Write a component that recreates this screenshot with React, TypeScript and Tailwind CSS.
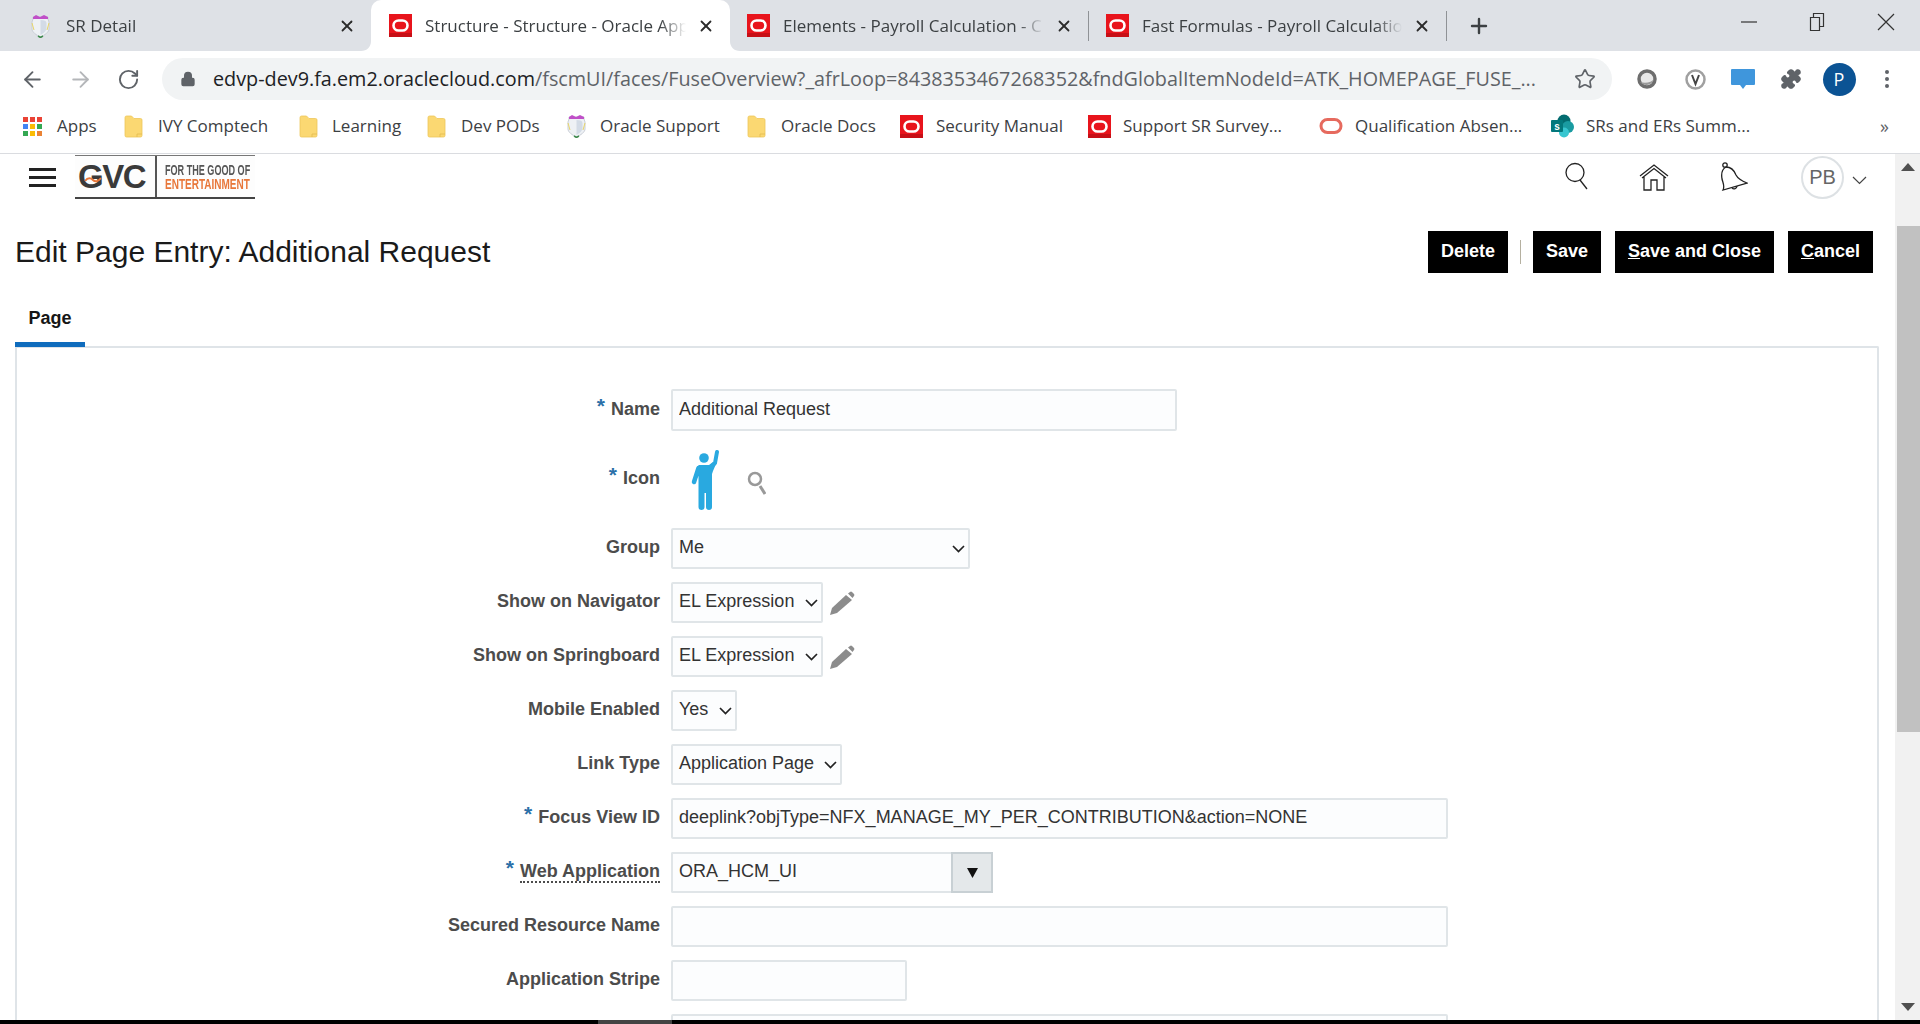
import type { ReactNode } from "react";
import { X, Plus, ArrowLeft, ArrowRight, RotateCw, Lock, Star, Puzzle } from "lucide-react";

const chromeFont = "font-['Open_Sans',sans-serif]";

const OracleIcon = () => (
  <svg width="23" height="23" viewBox="0 0 23 23">
    <rect width="23" height="23" fill="#e8141c" />
    <rect y="19" width="23" height="4" fill="#c70f16" />
    <rect x="4.5" y="6.5" width="14" height="10" rx="5" fill="none" stroke="#fff" strokeWidth="2.6" />
  </svg>
);

const ShieldIcon = () => (
  <svg width="21" height="24" viewBox="0 0 21 24">
    <path d="M3 3h15v2l1 3v7c0 3-4 6-8.500 8C6 21 2 18 2 15V8l1-3z" fill="#eef1f5" stroke="#c9ced6" strokeWidth="1" />
    <path d="M3 3l3-2 4 2 4-2 4 2v2H3z" fill="#c04fc8" />
    <path d="M10.500 6c4 0 6 1 6 3v5c0 3-3 5-6 7z" fill="#d3dbe6" />
    <path d="M2 9l2 7M19 9l-2 7" stroke="#e8d66a" strokeWidth="1" />
    <path d="M8 22l2.500 1.500L13 22" stroke="#3f8a4e" strokeWidth="1.500" fill="none" />
  </svg>
);

const FolderIcon = () => (
  <svg width="19" height="23" viewBox="0 0 19 23">
    <path d="M1 2.500A1.500 1.500 0 0 1 2.500 1h5L10 3.500h6.500A1.500 1.500 0 0 1 18 5v15.500a1.500 1.500 0 0 1-1.500 1.500h-14A1.500 1.500 0 0 1 1 20.500z" fill="#fbd872" stroke="#edc65a" strokeWidth="0.800" />
    <path d="M13 22v-3h5" fill="none" stroke="#e3bb4e" strokeWidth="0.800" />
  </svg>
);

const AppsIcon = () => {
  const colors = ["#ea4335", "#ea4335", "#ea4335", "#4285f4", "#fbbc04", "#34a853", "#34a853", "#fbbc04", "#ea8335"];
  return (
    <div className="grid grid-cols-3 gap-[2px] w-[19px]">
      {colors.map((c, i) => (
        <span key={i} className="w-[5px] h-[5px]" style={{ backgroundColor: c }} />
      ))}
    </div>
  );
};

const RingIcon = () => (
  <svg width="24" height="18" viewBox="0 0 24 18">
    <rect x="2" y="2.500" width="20" height="13" rx="6.500" fill="none" stroke="#e66a5e" strokeWidth="3" />
  </svg>
);

const SharepointIcon = () => (
  <svg width="24" height="24" viewBox="0 0 24 24">
    <circle cx="13" cy="7" r="6.500" fill="#036c70" />
    <circle cx="17" cy="13" r="6" fill="#1a9ba1" />
    <circle cx="13" cy="18.500" r="5" fill="#37c6d0" />
    <rect x="0" y="6" width="12" height="12" rx="1" fill="#03787c" />
    <text x="6" y="15.500" textAnchor="middle" fontSize="10" fontWeight="700" fill="#fff" fontFamily="Liberation Sans, sans-serif">s</text>
  </svg>
);

interface TabProps {
  icon: ReactNode;
  title: string;
  width: string;
  pad: string;
  active?: boolean;
}

const Tab = ({ icon, title, width, pad, active }: TabProps) => (
  <div className={`relative flex items-center h-full shrink-0 ${width} ${pad} ${active ? "bg-white rounded-t-[10px]" : ""}`}>
    {active && (
      <>
        <svg className="absolute bottom-0 left-[-10px]" width="10" height="10" viewBox="0 0 10 10"><path d="M10 0v10H0C6 10 10 6 10 0z" fill="#fff" /></svg>
        <svg className="absolute bottom-0 right-[-10px]" width="10" height="10" viewBox="0 0 10 10"><path d="M0 0v10h10C4 10 0 6 0 0z" fill="#fff" /></svg>
      </>
    )}
    <span className="w-[36px] shrink-0 flex items-center">{icon}</span>
    <span className="flex-1 min-w-0 mr-[11px] whitespace-nowrap text-[17px] text-[#3c4043] [mask-image:linear-gradient(to_right,black_90%,transparent)]">{title}</span>
    <X size={18} strokeWidth={2.4} className="shrink-0 mr-[15px] text-[#2b2b2b]" />
  </div>
);

const TabSep = () => <div className="w-px h-[30px] bg-[#8f9296] shrink-0" />;

const Bookmark = ({ icon, label, width, iconBox = "w-[34px]" }: { icon: ReactNode; label: string; width: string; iconBox?: string }) => (
  <div className={`flex items-center shrink-0 ${width}`}>
    <span className={`shrink-0 flex items-center ${iconBox}`}>{icon}</span>
    <span className="text-[17px] text-[#3c4043] whitespace-nowrap">{label}</span>
  </div>
);

const Chevron = () => (
  <svg width="13" height="8" viewBox="0 0 13 8" className="shrink-0">
    <path d="M1 1l5.500 5.500L12 1" fill="none" stroke="#222" strokeWidth="1.700" />
  </svg>
);

const Pencil = () => (
  <svg width="26" height="24" viewBox="0 0 26 24" className="shrink-0 ml-[6px]">
    <path d="M1 24l2-7L17 4l6 5L8 22z" fill="#8c8c8c" />
    <path d="M19 2.500l2-1.500a1.500 1.500 0 0 1 2 0l2 2a1.500 1.500 0 0 1 0 2l-1.500 2z" fill="#8c8c8c" />
  </svg>
);

const boxClass = "h-[41px] border-2 border-[#e0e5e8] rounded-[2px] bg-[#fcfdfe] text-[18px] text-[#333] flex items-center";

const Field = ({ value = "", width }: { value?: string; width: string }) => (
  <input readOnly defaultValue={value} className={`${boxClass} ${width} px-[6px] pb-[2px] outline-none`} />
);

const Choice = ({ value, width }: { value: string; width: string }) => (
  <div className={`${boxClass} ${width} pl-[6px] pr-[3px] justify-between`}>
    <span className="whitespace-nowrap pb-[2px]">{value}</span>
    <Chevron />
  </div>
);

const Row = ({ label, required, dotted, height = "h-[41px]", children }: { label: string; required?: boolean; dotted?: boolean; height?: string; children: ReactNode }) => (
  <div className={`flex items-center mb-[13px] ${height}`}>
    <div className="w-[643px] shrink-0 mr-[11px] pb-[2px] flex justify-end items-center text-[18px] font-bold text-[#4c4c4c] whitespace-nowrap">
      {required && <span className="text-[#2b70a8] text-[21px] leading-none mr-[6px] -mt-[8px] font-bold">*</span>}
      <span className={dotted ? "border-b-2 border-dotted border-[#4c4c4c] leading-[20px]" : ""}>{label}</span>
    </div>
    {children}
  </div>
);

const ActionButton = ({ children, width }: { children: ReactNode; width: string }) => (
  <button className={`h-[42px] pb-[2px] bg-black text-white text-[18px] font-bold shrink-0 ${width}`}>{children}</button>
);

const Logo = () => (
  <div className="flex w-[180px] h-[44px] border-t border-t-[#777] border-b-2 border-b-[#444] bg-[#fdfdfd] font-['Liberation_Sans',sans-serif]">
    <div className="relative w-[82px] shrink-0 border-r-2 border-r-[#555] flex items-center pl-[3px]">
      <span className="text-[33px] font-bold leading-none tracking-[-1.500px] text-[#3a3a3a]">GVC</span>
      <svg className="absolute left-[9px] top-[20px]" width="18" height="8" viewBox="0 0 18 8">
        <path d="M1 5c3-4 6-3 8-1s5 2 8-2" fill="none" stroke="#e8773a" strokeWidth="2" />
      </svg>
    </div>
    <div className="flex flex-col justify-center pl-[8px] overflow-hidden leading-[14px] text-[15px] font-bold whitespace-nowrap">
      <span className="origin-left scale-x-[0.605] text-[#555]">FOR THE GOOD OF</span>
      <span className="origin-left scale-x-[0.667] text-[#e8773a]">ENTERTAINMENT</span>
    </div>
  </div>
);

export default function App() {
  return (
    <div className="w-[1920px] h-[1024px] flex flex-col overflow-hidden bg-white font-['Liberation_Sans',sans-serif]">
      {/* browser tab strip */}
      <div className={`h-[51px] shrink-0 bg-[#dee1e6] flex items-center ${chromeFont}`}>
        <Tab icon={<ShieldIcon />} title="SR Detail" width="w-[371px]" pad="pl-[30px]" />
        <Tab active icon={<OracleIcon />} title="Structure - Structure - Oracle App" width="w-[359px]" pad="pl-[18px]" />
        <Tab icon={<OracleIcon />} title="Elements - Payroll Calculation - C" width="w-[358px]" pad="pl-[17px]" />
        <TabSep />
        <Tab icon={<OracleIcon />} title="Fast Formulas - Payroll Calculatio" width="w-[357px]" pad="pl-[17px]" />
        <TabSep />
        <Plus size={24} strokeWidth={2.4} className="ml-[20px] text-[#3c4043]" />
        <div className="ml-auto flex items-center text-[#333] -mt-[7px]">
          <svg width="16" height="16" viewBox="0 0 16 16" className="mr-[52px]"><path d="M0 8h16" stroke="#333" strokeWidth="1.200" /></svg>
          <svg width="16" height="20" viewBox="0 0 16 20" className="mr-[52px]">
            <path d="M1.500 5.500h9v13h-9zM4.500 5.500v-4h10v13h-4" fill="none" stroke="#333" strokeWidth="1.200" />
          </svg>
          <svg width="18" height="18" viewBox="0 0 18 18" className="mr-[25px]"><path d="M1 1l16 16M17 1L1 17" stroke="#333" strokeWidth="1.200" /></svg>
        </div>
      </div>

      {/* toolbar */}
      <div className={`h-[56px] shrink-0 flex items-center pl-[8px] ${chromeFont}`}>
        <div className="w-[48px] flex justify-center"><ArrowLeft size={25} strokeWidth={1.800} className="text-[#5f6368]" /></div>
        <div className="w-[48px] flex justify-center"><ArrowRight size={25} strokeWidth={1.800} className="text-[#b4b6b9]" /></div>
        <div className="w-[48px] flex justify-center"><RotateCw size={23} strokeWidth={2} className="text-[#5f6368]" /></div>
        <div className="ml-[10px] w-[1450px] h-[42px] rounded-full bg-[#f1f3f4] flex items-center pl-[18px] pr-[16px]">
          <Lock size={16} fill="#5f6368" strokeWidth={2} className="text-[#5f6368] shrink-0" />
          <div className="ml-[17px] whitespace-nowrap text-[19.800px] text-[#5f6368]">
            <span className="text-[#202124]">edvp-dev9.fa.em2.oraclecloud.com</span>/fscmUI/faces/FuseOverview?_afrLoop=8438353467268352&amp;fndGlobalItemNodeId=ATK_HOMEPAGE_FUSE_...
          </div>
          <Star size={22} strokeWidth={1.800} className="ml-auto text-[#5f6368] shrink-0" />
        </div>
        <div className="ml-[11px] flex items-center">
          <div className="w-[48px] flex justify-center">
            <svg width="20" height="20" viewBox="0 0 20 20">
              <circle cx="10" cy="10" r="8" fill="#e8e8e8" stroke="#6e6e6e" strokeWidth="3.500" />
              <path d="M3 13a8 8 0 0 0 14-3c-2 3-8 5-14 3z" fill="#9a9a9a" />
            </svg>
          </div>
          <div className="w-[48px] flex justify-center">
            <svg width="21" height="21" viewBox="0 0 21 21">
              <circle cx="10.500" cy="10.500" r="9" fill="#fff" stroke="#a0a0a0" strokeWidth="2.500" />
              <path d="M7 6l3.500 9L14 6" fill="none" stroke="#444" strokeWidth="2" />
            </svg>
          </div>
          <div className="w-[48px] flex justify-center">
            <svg width="24" height="20" viewBox="0 0 24 20">
              <path d="M1 0h22a1 1 0 0 1 1 1v14a1 1 0 0 1-1 1h-8l-3 4-3-4H1a1 1 0 0 1-1-1V1a1 1 0 0 1 1-1z" fill="#3f96dc" />
            </svg>
          </div>
          <div className="w-[48px] flex justify-center"><Puzzle size={22} fill="#5f6368" strokeWidth={1.500} className="text-[#5f6368]" /></div>
          <div className="w-[48px] flex justify-center">
            <div className="w-[33px] h-[33px] rounded-full bg-[#0b5394] text-white text-[18px] flex items-center justify-center">P</div>
          </div>
          <div className="w-[48px] flex flex-col items-center gap-[3px]">
            <span className="w-[4px] h-[4px] rounded-full bg-[#5f6368]" />
            <span className="w-[4px] h-[4px] rounded-full bg-[#5f6368]" />
            <span className="w-[4px] h-[4px] rounded-full bg-[#5f6368]" />
          </div>
        </div>
      </div>

      {/* bookmarks bar */}
      <div className={`h-[47px] shrink-0 border-b border-[#dadce0] flex items-center pl-[23px] pb-[8px] ${chromeFont}`}>
        <Bookmark icon={<AppsIcon />} label="Apps" width="w-[101px]" />
        <Bookmark icon={<FolderIcon />} label="IVY Comptech" width="w-[175px]" />
        <Bookmark icon={<FolderIcon />} label="Learning" width="w-[128px]" iconBox="w-[33px]" />
        <Bookmark icon={<FolderIcon />} label="Dev PODs" width="w-[139px]" />
        <Bookmark icon={<ShieldIcon />} label="Oracle Support" width="w-[181px]" />
        <Bookmark icon={<FolderIcon />} label="Oracle Docs" width="w-[153px]" />
        <Bookmark icon={<OracleIcon />} label="Security Manual" width="w-[188px]" iconBox="w-[36px]" />
        <Bookmark icon={<OracleIcon />} label="Support SR Survey..." width="w-[231px]" iconBox="w-[35px]" />
        <Bookmark icon={<RingIcon />} label="Qualification Absen..." width="w-[232px]" iconBox="w-[36px]" />
        <Bookmark icon={<SharepointIcon />} label="SRs and ERs Summ..." width="w-[329px]" iconBox="w-[35px]" />
        <span className="text-[18px] text-[#5f6368]">»</span>
      </div>

      {/* page */}
      <div className="flex-1 min-h-0 flex">
        <div className="flex-1 min-w-0 flex flex-col">
          <header className="h-[46px] shrink-0 flex items-center pl-[29px]">
            <div className="w-[27px] flex flex-col gap-[5px]">
              <span className="h-[3px] bg-[#222]" />
              <span className="h-[3px] bg-[#222]" />
              <span className="h-[3px] bg-[#222]" />
            </div>
            <div className="ml-[19px]"><Logo /></div>
            <div className="ml-auto flex items-center pr-[28px]">
              <svg width="24" height="28" viewBox="0 0 24 28" fill="none" stroke="#222" strokeWidth="1.300" className="mr-[50px] -mt-[3px]">
                <circle cx="10" cy="10.500" r="9" /><path d="M15 18l7 9" />
              </svg>
              <svg width="30" height="27" viewBox="0 0 30 27" fill="none" stroke="#222" strokeWidth="1.300" className="mr-[51px]">
                <path d="M1 12L15 1l14 11M3 14L15 4.500 27 14M5 13v13h7V16h6v10h7V13" />
              </svg>
              <svg width="28" height="30" viewBox="0 0 28 30" fill="none" stroke="#222" strokeWidth="1.300" className="mr-[53px]">
                <circle cx="5" cy="3" r="2.200" />
                <path d="M6 5c5 0 8 3 10 8 2 4 6 6 11 8L3 28c2-4 0-7-1-11C1 11 2 7 6 5z" />
                <path d="M12 26a3 3 0 0 0 5-2" />
              </svg>
              <div className="w-[43px] h-[43px] rounded-full border-2 border-[#dde1e4] flex items-center justify-center text-[20px] text-[#666]">PB</div>
              <svg width="15" height="9" viewBox="0 0 15 9" fill="none" stroke="#444" strokeWidth="1.200" className="ml-[8px] mt-[6px]"><path d="M1 1l6.500 6.500L14 1" /></svg>
            </div>
          </header>

          <div className="mt-[31px] h-[42px] shrink-0 flex items-center justify-between pl-[15px] pr-[22px]">
            <h1 className="text-[30px] text-[#1a1a1a] whitespace-nowrap -mt-[2px]">Edit Page Entry: Additional Request</h1>
            <div className="flex items-center">
              <ActionButton width="w-[80px]">Delete</ActionButton>
              <span className="w-px h-[24px] bg-[#b5b0a0] mx-[12px]" />
              <ActionButton width="w-[68px]">Save</ActionButton>
              <div className="w-[14px]" />
              <ActionButton width="w-[159px]"><u>S</u>ave and Close</ActionButton>
              <div className="w-[14px]" />
              <ActionButton width="w-[85px]"><u>C</u>ancel</ActionButton>
            </div>
          </div>

          <div className="mt-[23px] ml-[15px] w-[70px] h-[51px] shrink-0 relative z-10 border-b-[5px] border-[#0f6cbd] pb-[2px] flex items-center justify-center text-[18px] font-bold text-[#161616]">Page</div>

          <div className="-mt-[1px] ml-[15px] w-[1864px] flex-1 min-h-0 overflow-hidden border-2 border-b-0 border-[#dfe4e8] rounded-t-[2px] pt-[41px]">
            <Row label="Name" required height="h-[42px]"><Field value="Additional Request" width="w-[506px] h-[42px]" /></Row>
            <Row label="Icon" required height="h-[71px]">
              <svg width="29" height="60" viewBox="0 0 29 60" className="ml-[20px]">
                <circle cx="13" cy="8" r="4.800" fill="#29a9e0" />
                <path d="M8 15h10l4-3 3 2-3 7-1 3v33a3 3 0 0 1-6 0V43h-1.500v14a3 3 0 0 1-6 0V26L6 28V17z" fill="#29a9e0" />
                <path d="M7.500 18L3 32" stroke="#29a9e0" strokeWidth="4.500" strokeLinecap="round" />
                <path d="M20 17l4-4 2-11" fill="none" stroke="#29a9e0" strokeWidth="4" strokeLinecap="round" />
              </svg>
              <svg width="19" height="24" viewBox="0 0 19 24" fill="none" stroke="#999" className="ml-[27px] mt-[6px]">
                <circle cx="8" cy="8" r="6" strokeWidth="2.500" />
                <path d="M13 15l5 8" strokeWidth="3" />
              </svg>
            </Row>
            <Row label="Group"><Choice value="Me" width="w-[299px]" /></Row>
            <Row label="Show on Navigator"><Choice value="EL Expression" width="w-[152px]" /><Pencil /></Row>
            <Row label="Show on Springboard"><Choice value="EL Expression" width="w-[152px]" /><Pencil /></Row>
            <Row label="Mobile Enabled"><Choice value="Yes" width="w-[66px]" /></Row>
            <Row label="Link Type"><Choice value="Application Page" width="w-[171px]" /></Row>
            <Row label="Focus View ID" required><Field value="deeplink?objType=NFX_MANAGE_MY_PER_CONTRIBUTION&action=NONE" width="w-[777px]" /></Row>
            <Row label="Web Application" required dotted>
              <Field value="ORA_HCM_UI" width="w-[280px] rounded-r-none border-r-0" />
              <div className="w-[42px] h-[41px] bg-[#e4e8ea] border-2 border-[#c8d0d4] flex items-center justify-center">
                <svg width="13" height="13" viewBox="0 0 13 13"><path d="M1 2h11L6.500 12z" fill="#111" /></svg>
              </div>
            </Row>
            <Row label="Secured Resource Name"><Field width="w-[777px]" /></Row>
            <Row label="Application Stripe"><Field width="w-[236px]" /></Row>
            <Row label=""><Field width="w-[777px]" /></Row>
          </div>
        </div>

        {/* page scrollbar */}
        <div className="w-[25px] shrink-0 bg-[#f1f1f1] flex flex-col items-center">
          <svg width="14" height="8" viewBox="0 0 14 8" className="mt-[9px] shrink-0"><path d="M0 8L7 0l7 8z" fill="#505050" /></svg>
          <div className="mt-[55px] h-[506px] w-[23px] ml-[2px] bg-[#c1c1c1] shrink-0" />
          <svg width="14" height="8" viewBox="0 0 14 8" className="mt-auto mb-[9px] shrink-0"><path d="M0 0h14L7 8z" fill="#505050" /></svg>
        </div>
      </div>

      {/* bottom edge of the capture */}
      <div className="h-[4px] shrink-0 bg-black flex">
        <div className="ml-[598px] w-[74px] bg-[#444]" />
      </div>
    </div>
  );
}
